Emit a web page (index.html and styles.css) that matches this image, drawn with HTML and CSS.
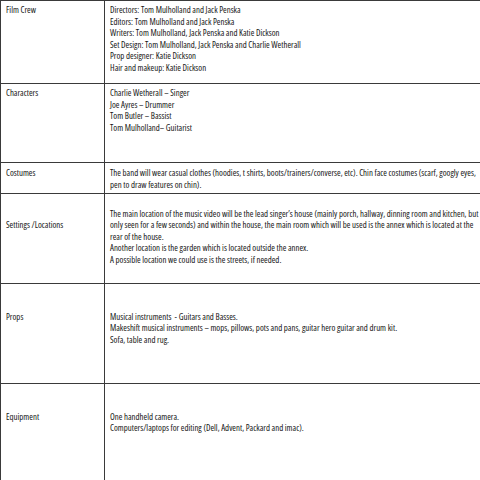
FILE: index.html
```html
<!DOCTYPE html>
<html>
<head>
<meta charset="utf-8">
<link rel="stylesheet" href="styles.css">
</head>
<body>
<table class="sheet">
  <colgroup><col class="c-label"><col class="c-body"></colgroup>
  <tr class="r-crew">
    <td class="label">Film Crew</td>
    <td class="body">
      <div>Directors: Tom Mulholland and Jack Penska</div>
      <div>Editors: Tom Mulholland and Jack Penska</div>
      <div>Writers: Tom Mulholland, Jack Penska and Katie Dickson</div>
      <div>Set Design: Tom Mulholland, Jack Penska and Charlie Wetherall</div>
      <div>Prop designer: Katie Dickson</div>
      <div>Hair and makeup: Katie Dickson</div>
    </td>
  </tr>
  <tr class="r-chars">
    <td class="label">Characters</td>
    <td class="body">
      <div>Charlie Wetherall – Singer</div>
      <div>Joe Ayres – Drummer</div>
      <div>Tom Butler – Bassist</div>
      <div>Tom Mulholland– Guitarist</div>
    </td>
  </tr>
  <tr class="r-cost">
    <td class="label pad-c">Costumes</td>
    <td class="body pad-c">
      <div>The band will wear casual clothes (hoodies, t shirts, boots/trainers/converse, etc). Chin face costumes (scarf, googly eyes,<br>pen to draw features on chin).</div>
    </td>
  </tr>
  <tr class="r-set">
    <td class="label skip2">Settings /Locations</td>
    <td class="body skip1">
      <div>The main location of the music video will be the lead singer’s house (mainly porch, hallway, dinning room and kitchen, but<br>only seen for a few seconds) and within the house, the main room which will be used is the annex which is located at the<br>rear of the house.</div>
      <div>Another location is the garden which is located outside the annex.</div>
      <div>A possible location we could use is the streets, if needed.</div>
    </td>
  </tr>
  <tr class="r-props">
    <td class="label skip2b">Props</td>
    <td class="body skip2b">
      <div>Musical instruments &nbsp;- Guitars and Basses.</div>
      <div>Makeshift musical instruments – mops, pillows, pots and pans, guitar hero guitar and drum kit.</div>
      <div>Sofa, table and rug.</div>
    </td>
  </tr>
  <tr class="r-equip">
    <td class="label skip2b">Equipment</td>
    <td class="body skip2b">
      <div>One handheld camera.</div>
      <div>Computers/laptops for editing (Dell, Advent, Packard and imac).</div>
    </td>
  </tr>
</table>
</body>
</html>
```
FILE: styles.css
```css
html, body {
  margin: 0;
  padding: 0;
  background: #ffffff;
}
body {
  font-family: "Open Sans", "Roboto", "Liberation Sans", sans-serif;
  font-stretch: 75%;
  font-size: 8.8px;
  line-height: 11.5px;
  color: #141414;
}
.sheet {
  border-collapse: collapse;
  table-layout: fixed;
  width: 480px;
}
.c-label { width: 104px; }
.c-body { width: 376px; }
.sheet td {
  border: 1px solid #3a3a3a;
  vertical-align: top;
  padding: 4px 4px 0 5px;
  overflow: hidden;
}
.sheet td.body {
  padding-left: 5px;
  padding-right: 2px;
  white-space: nowrap;
}
.r-crew { height: 83px; }
.r-chars { height: 79px; }
.r-cost { height: 31px; }
.r-set { height: 90px; }
.r-props { height: 100px; }
.r-equip { height: 110px; }
.sheet td.pad-c { padding-top: 5px; }
.sheet td.skip1 { padding-top: 14.5px; }
.sheet td.skip2 { padding-top: 26px; }
.sheet td.skip2b { padding-top: 27.5px; }
```
